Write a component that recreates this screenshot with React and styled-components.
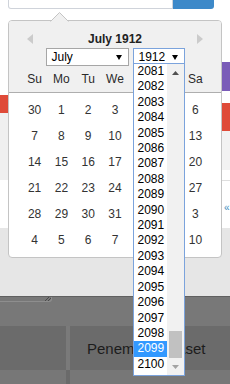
import React from 'react';
import styled, { createGlobalStyle } from 'styled-components';

const GlobalStyle = createGlobalStyle`
  html, body {
    margin: 0;
    padding: 0;
  }
  body {
    width: 230px;
    height: 384px;
    overflow: hidden;
    background: #fff;
    font-family: "Liberation Sans", Arial, sans-serif;
  }
`;

const Page = styled.div`
  position: relative;
  width: 230px;
  height: 384px;
  display: flex;
  flex-direction: column;
  overflow: hidden;
`;

const TopBar = styled.div`
  display: flex;
  flex-shrink: 0;
  height: 9px;
  padding: 0 16px 0 8px;
`;

const SearchBox = styled.div`
  flex: 1;
  border: 1px solid #cfd3da;
  border-top: none;
  border-bottom-left-radius: 3px;
`;

const SearchButton = styled.div`
  width: 41px;
  background: #3d89c9;
  border-bottom-right-radius: 3px;
`;

const Middle = styled.div`
  display: grid;
  grid-template-columns: 8px 1fr 8px;
  flex-shrink: 0;
  height: 219px;
`;

const Rail = styled.div`
  display: flex;
  flex-direction: column;
  overflow: hidden;
`;

const Stripe = styled.div`
  flex-shrink: 0;
  box-sizing: border-box;
  height: ${(p) => p.$h}px;
  background: ${(p) => p.$bg || '#fff'};
  border-top: ${(p) => (p.$line ? '1px solid #dedede' : 'none')};
  color: #3c8dbc;
  font-size: 10px;
  line-height: 1;
  padding: ${(p) => (p.$line ? '22px 0 0 2px' : '0')};
  white-space: nowrap;
`;

const GrayBand = styled.div`
  flex-shrink: 0;
  height: 68px;
  background: #e6e6e6;
`;

const Footer = styled.div`
  flex: 1;
  display: flex;
  flex-direction: column;
  background: #787878;
`;

const FooterTop = styled.div`
  height: 30px;
  flex-shrink: 0;
  border-top: 1px solid #606060;
  box-sizing: border-box;
`;

const TextareaEdge = styled.div`
  width: 52px;
  height: 5px;
  box-sizing: border-box;
  border: 1px solid #8e8e8e;
  border-top: none;
  border-left: none;
  border-bottom-right-radius: 3px;
  display: flex;
  justify-content: flex-end;
  align-items: flex-end;
`;

const TableRow = styled.div`
  display: grid;
  grid-template-columns: 66px 1fr;
  column-gap: 4px;
  height: ${(p) => p.$h}px;
  flex-shrink: 0;
  background: ${(p) => p.$divider};
`;

const Cell = styled.div`
  background: ${(p) => p.$bg};
  display: flex;
  align-items: center;
  padding-left: 17px;
  font-size: 15px;
  color: #1c1c1c;
  white-space: nowrap;
  overflow: hidden;
`;

/* datepicker popover */
const Popover = styled.div`
  position: absolute;
  top: 20px;
  left: 8px;
  width: 214px;
  box-sizing: border-box;
  border: 1px solid #c4c4c4;
  border-radius: 4px;
  background: #fff;
  color: #2a2a2a;
  font-size: 12px;
  z-index: 5;
`;

const Caret = styled.svg`
  position: absolute;
  top: -10px;
  left: 41px;
  display: block;
`;

const Header = styled.div`
  background: #f0f0f0;
  border-bottom: 1px solid #aeaeae;
  border-radius: 3px 3px 0 0;
  padding: 10px 0 5px;
`;

const NavRow = styled.div`
  display: flex;
  justify-content: space-between;
  align-items: center;
  height: 16px;
  padding: 0 18px;
`;

const Title = styled.div`
  font-weight: bold;
  font-size: 12px;
  line-height: 16px;
  color: #222;
`;

const SelectRow = styled.div`
  display: flex;
  justify-content: center;
  gap: 4px;
  margin-top: 1px;
`;

const Select = styled.div`
  position: relative;
  box-sizing: border-box;
  width: ${(p) => p.$w}px;
  height: 18px;
  border: 1px solid ${(p) => (p.$focused ? '#7ba3dc' : '#a6a6a6')};
  background: #fff;
  display: flex;
  align-items: center;
  justify-content: space-between;
  padding: 0 6px 0 5px;
  font-size: 12px;
  color: #000;
`;

const DayGrid = styled.div`
  display: grid;
  grid-template-columns: repeat(7, 26.8px);
  grid-auto-rows: ${(p) => p.$row}px;
  justify-content: center;
  align-items: center;
  text-align: center;
  line-height: ${(p) => p.$row}px;
  margin-top: ${(p) => p.$top || 0}px;
  padding: ${(p) => p.$pad || 0}px 0;
  color: ${(p) => p.$color};
`;

/* open year listbox */
const YearList = styled.div`
  position: absolute;
  top: calc(100% - 2px);
  left: -1px;
  width: 52px;
  height: 313px;
  box-sizing: border-box;
  border: 1px solid #7ba3dc;
  background: #fff;
  display: flex;
  z-index: 10;
`;

const Options = styled.div`
  flex: 1;
  display: flex;
  flex-direction: column;
`;

const Option = styled.div`
  height: 15.42px;
  line-height: 15.42px;
  padding-left: 4px;
  font-size: 12px;
  color: ${(p) => (p.$selected ? '#fff' : '#000')};
  background: ${(p) => (p.$selected ? '#3399ff' : 'transparent')};
`;

const Scrollbar = styled.div`
  width: 17px;
  display: flex;
  flex-direction: column;
  background: #f1f1f1;
`;

const ScrollButton = styled.div`
  height: 17px;
  display: flex;
  align-items: center;
  justify-content: center;
  flex-shrink: 0;
`;

const Track = styled.div`
  flex: 1;
  display: flex;
  flex-direction: column;
  justify-content: flex-end;
`;

const Thumb = styled.div`
  width: 13px;
  height: 27px;
  margin: 0 auto;
  background: #c1c1c1;
`;

const Triangle = ({ dir, color, w, h }) => {
  const pts = {
    left: `${w},0 ${w},${h} 0,${h / 2}`,
    right: `0,0 0,${h} ${w},${h / 2}`,
    down: `0,0 ${w},0 ${w / 2},${h}`,
    up: `0,${h} ${w},${h} ${w / 2},0`,
  }[dir];
  return (
    <svg width={w} height={h} viewBox={`0 0 ${w} ${h}`} style={{ display: 'block' }}>
      <polygon points={pts} fill={color} />
    </svg>
  );
};

const dayNames = ['Su', 'Mo', 'Tu', 'We', 'Th', 'Fr', 'Sa'];
const days = [
  30, 1, 2, 3, 4, 5, 6,
  7, 8, 9, 10, 11, 12, 13,
  14, 15, 16, 17, 18, 19, 20,
  21, 22, 23, 24, 25, 26, 27,
  28, 29, 30, 31, 1, 2, 3,
  4, 5, 6, 7, 8, 9, 10,
];
const years = Array.from({ length: 20 }, (_, i) => 2081 + i);

export default function App() {
  return (
    <Page>
      <GlobalStyle />
      <TopBar>
        <SearchBox />
        <SearchButton />
      </TopBar>

      <Middle>
        <Rail>
          <Stripe $h={86} />
          <Stripe $h={18} $bg="#df4b39" />
          <Stripe $h={67} $bg="#f0f0f0" />
          <Stripe $h={48} />
        </Rail>
        <div />
        <Rail>
          <Stripe $h={53} />
          <Stripe $h={29} $bg="#7a5cb8" />
          <Stripe $h={12} />
          <Stripe $h={28} $bg="#df4b39" />
          <Stripe $h={39} $bg="#f2f2f2" />
          <Stripe $h={10} />
          <Stripe $h={48} $line>«</Stripe>
        </Rail>
      </Middle>

      <GrayBand />

      <Footer>
        <FooterTop>
          <TextareaEdge>
            <svg width="7" height="4" viewBox="0 0 7 4" style={{ display: 'block' }}>
              <path d="M1 4 L5 0 M4 4 L7 1" stroke="#4a4a4a" strokeWidth="1" />
            </svg>
          </TextareaEdge>
        </FooterTop>
        <TableRow $h={44} $divider="#7a7a7a">
          <Cell $bg="#6b6b6b" />
          <Cell $bg="#6b6b6b">Penempatan Aset</Cell>
        </TableRow>
        <TableRow $h={14} $divider="#6a6a6a">
          <Cell $bg="#777" />
          <Cell $bg="#777" />
        </TableRow>
      </Footer>

      <Popover>
        <Caret width="19" height="11" viewBox="0 0 19 11">
          <path d="M0 11 L9.5 1.5 L19 11 Z" fill="#f0f0f0" />
          <path d="M0.5 10.5 L9.5 1.5 L18.5 10.5" fill="none" stroke="#c4c4c4" strokeWidth="1" />
        </Caret>
        <Header>
          <NavRow>
            <Triangle dir="left" color="#cbcbcb" w={6} h={10} />
            <Title>July 1912</Title>
            <Triangle dir="right" color="#cbcbcb" w={6} h={10} />
          </NavRow>
          <SelectRow>
            <Select $w={83}>
              <span>July</span>
              <Triangle dir="down" color="#000" w={6} h={5} />
            </Select>
            <Select $w={52} $focused>
              <span>1912</span>
              <Triangle dir="down" color="#000" w={6} h={5} />
              <YearList>
                <Options>
                  {years.map((y) => (
                    <Option key={y} $selected={y === 2099}>
                      {y}
                    </Option>
                  ))}
                </Options>
                <Scrollbar>
                  <ScrollButton>
                    <Triangle dir="up" color="#505050" w={7} h={4} />
                  </ScrollButton>
                  <Track>
                    <Thumb />
                  </Track>
                  <ScrollButton>
                    <Triangle dir="down" color="#a3a3a3" w={7} h={4} />
                  </ScrollButton>
                </Scrollbar>
              </YearList>
            </Select>
          </SelectRow>
          <DayGrid $row={16} $top={5} $color="#2a2a2a">
            {dayNames.map((d) => (
              <div key={d}>{d}</div>
            ))}
          </DayGrid>
        </Header>
        <DayGrid $row={26} $pad={4} $color="#333">
          {days.map((d, i) => (
            <div key={i}>{d}</div>
          ))}
        </DayGrid>
      </Popover>
    </Page>
  );
}
